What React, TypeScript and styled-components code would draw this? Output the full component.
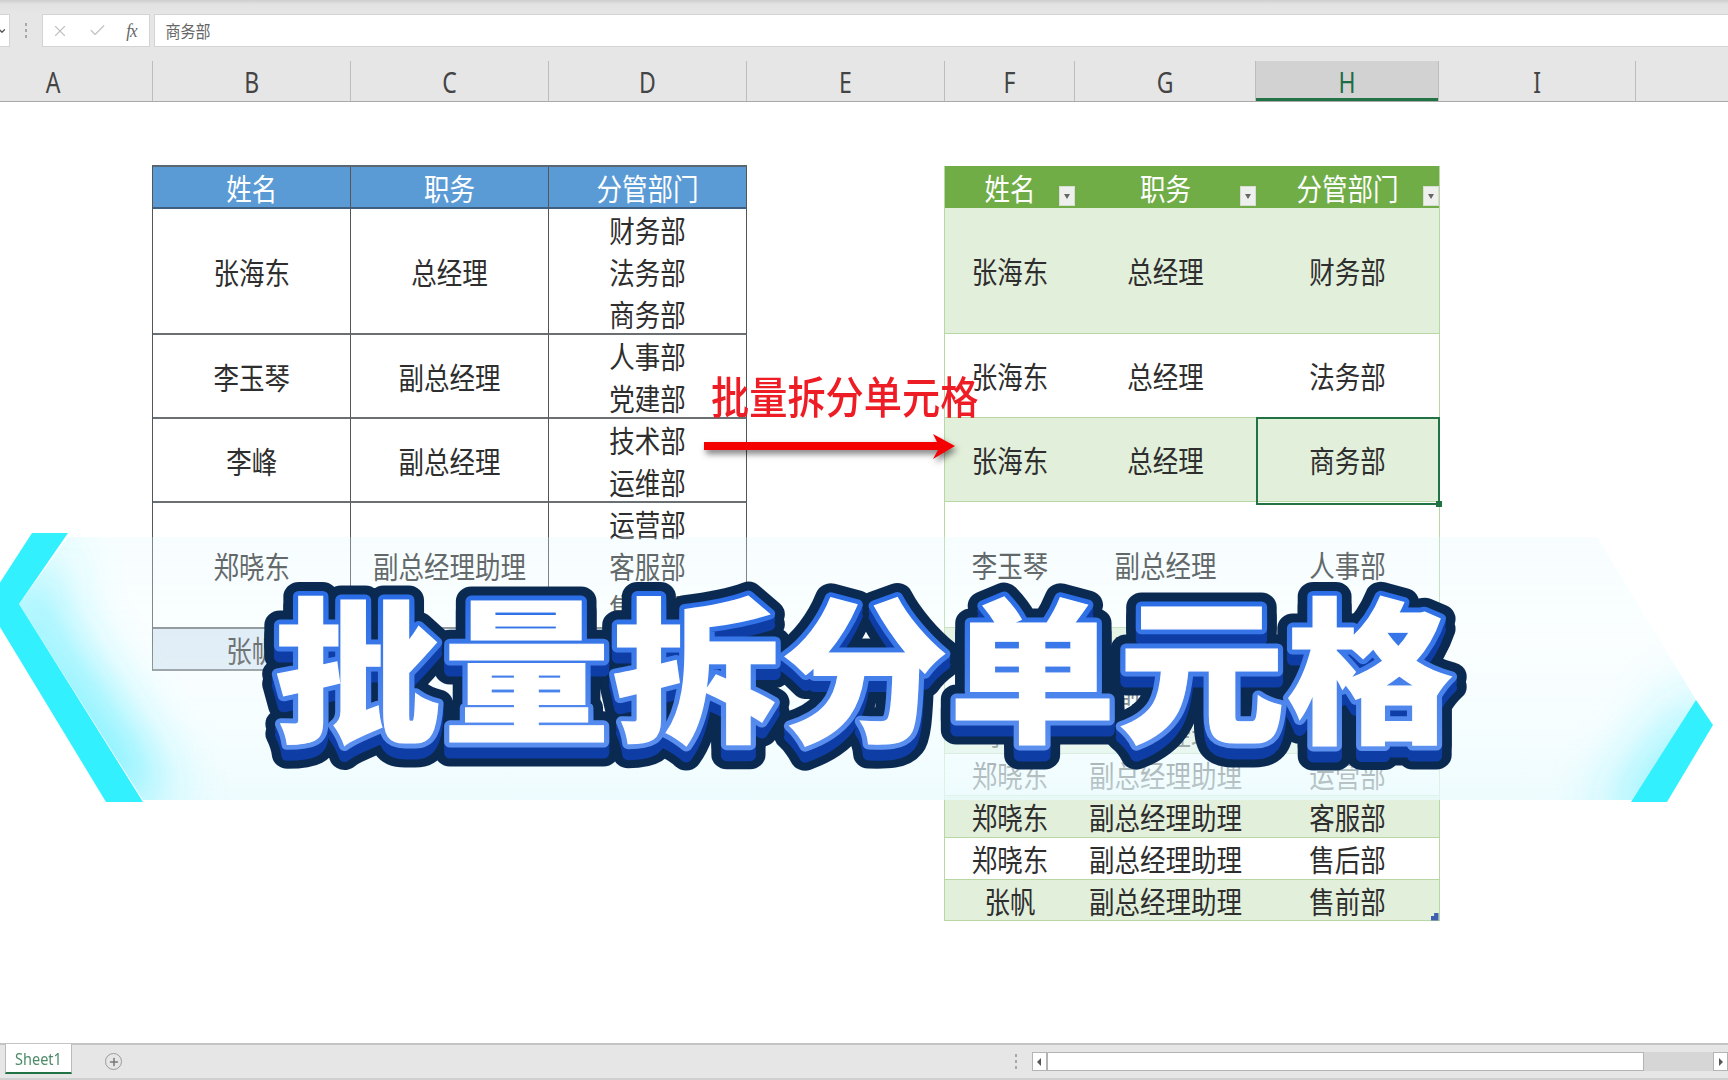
import React from 'react';
import styled, { createGlobalStyle } from 'styled-components';
import { X, Check, Plus, ChevronDown } from 'lucide-react';

const Global = createGlobalStyle`
  html, body { margin: 0; padding: 0; background: #fff; }
  body { font-family: "Noto Sans CJK SC", "Noto Sans", sans-serif; overflow: hidden; }
`;

const COLS = '153px 197.5px 198px 198px 198px 130px 181px 183px 197.5px 1fr';

const Page = styled.div`
  position: relative;
  width: 1728px;
  height: 1080px;
  overflow: hidden;
  display: flex;
  flex-direction: column;
  background: #fff;
`;

const Soft = styled.div`
  display: flex;
  flex-direction: column;
  height: 100%;
  filter: blur(0.5px);
`;

/* ---------- formula bar ---------- */
const FormulaBar = styled.div`
  height: 61px;
  box-sizing: border-box;
  padding-top: 14px;
  padding-bottom: 14px;
  display: flex;
  gap: 4px;
  background: linear-gradient(#cdcdcd 0, #e2e2e2 4px, #e6e6e6 13px);
`;
const NameBox = styled.div`
  width: 10px;
  background: #fff;
  border: 1px solid #d4d4d4;
  border-left: 0;
  box-sizing: border-box;
  display: flex;
  align-items: center;
  overflow: hidden;
  color: #555;
`;
const Grip = styled.div`
  width: 23.5px;
  display: flex;
  flex-direction: column;
  align-items: center;
  justify-content: center;
  gap: 3px;
  span { width: 2px; height: 3px; background: #a8a8a8; }
`;
const FxBox = styled.div`
  width: 108px;
  background: #fff;
  border: 1px solid #d4d4d4;
  box-sizing: border-box;
  display: flex;
  align-items: center;
  justify-content: space-between;
  padding: 0 12px 0 8px;
  color: #c2c2c2;
`;
const FxLabel = styled.i`
  font-family: "Liberation Serif", serif;
  font-size: 17px;
  color: #666;
  letter-spacing: -1px;
  transform: scaleY(1.1);
`;
const FormulaInput = styled.div`
  flex: 1;
  background: #fff;
  border: 1px solid #d4d4d4;
  border-right: 0;
  box-sizing: border-box;
  display: flex;
  align-items: center;
  padding-left: 11px;
  font-size: 15px;
  color: #666;
`;
const Stretched = styled.span`
  display: inline-block;
  transform: scaleY(1.14);
`;

/* ---------- column header ---------- */
const ColumnHeader = styled.div`
  height: 39.5px;
  display: grid;
  grid-template-columns: ${COLS};
  background: #e6e6e6;
  border-bottom: 1.5px solid #a9a9a9;
  box-sizing: content-box;
`;
const ColHead = styled.div<{ $active?: boolean; $shift?: number; $last?: boolean }>`
  display: flex;
  align-items: center;
  justify-content: center;
  box-sizing: border-box;
  padding-right: ${p => p.$shift || 0}px;
  border-right: ${p => (p.$last ? '0' : '1px solid #bdbdbd')};
  background: ${p => (p.$active ? '#d2d2d2' : 'transparent')};
  box-shadow: ${p => (p.$active ? 'inset 0 -3px 0 #217346' : 'none')};
  font-family: "Noto Sans", sans-serif;
  font-size: 23px;
  color: ${p => (p.$active ? '#1f6b45' : '#444')};
  span { display: inline-block; transform: translate(0.5px, 1px) scaleY(1.25); }
`;

/* ---------- sheet ---------- */
const Sheet = styled.div`
  flex: 1;
  display: grid;
  grid-template-columns: ${COLS};
  align-items: start;
  padding-top: 65px;
  background: #fff;
  position: relative;
`;
const rowsTemplate = (rows: number[]) => rows.map(r => `${r}px`).join(' ');

const LeftTable = styled.div<{ $rows: number[] }>`
  grid-column: 2 / 5;
  display: grid;
  grid-template-columns: subgrid;
  grid-template-rows: ${p => rowsTemplate(p.$rows)};
  border-top: 2px solid #5a6672;
  border-left: 1px solid #555;
  margin: -2px 0 0 -1px;
`;
const RightTable = styled.div<{ $rows: number[] }>`
  grid-column: 6 / 9;
  position: relative;
  display: grid;
  grid-template-columns: subgrid;
  grid-template-rows: ${p => rowsTemplate(p.$rows)};
  border-left: 1px solid #b9d7a4;
  border-right: 1px solid #b9d7a4;
  margin: -1px -1px 0;
`;
const BaseCell = styled.div`
  box-sizing: border-box;
  display: flex;
  flex-direction: column;
  align-items: center;
  justify-content: center;
  font-size: 25.5px;
  line-height: 42px;
  color: #2e2e2e;
  white-space: nowrap;
`;
const LeftCell = styled(BaseCell)<{ $fill?: string }>`
  background: ${p => p.$fill || 'transparent'};
  border-right: 1px solid #555;
  border-bottom: 2px solid #6a6f73;
`;
const LeftHead = styled(LeftCell)`
  background: #5b9bd5;
  color: #fff;
  border-bottom-color: #3f5f80;
`;
const RightCell = styled(BaseCell)<{ $band: boolean }>`
  background: ${p => (p.$band ? '#e2efda' : '#fff')};
  border-bottom: 1.5px solid #b9d7a4;
`;
const RightHead = styled(BaseCell)`
  position: relative;
  background: #70ad47;
  color: #fff;
`;
const Line = styled.span`
  display: block;
  height: 42px;
  transform: translateX(0.5px) scaleY(1.16);
`;
const FilterBtn = styled.span`
  position: absolute;
  right: 0;
  bottom: 2px;
  width: 16px;
  height: 20px;
  background: #eef0ee;
  border: 1px solid #d8dcd4;
  box-sizing: border-box;
  &::after {
    content: '';
    position: absolute;
    left: 4px;
    top: 7px;
    border-left: 3px solid transparent;
    border-right: 3px solid transparent;
    border-top: 5px solid #666;
  }
`;
const SelectedCell = styled.div`
  position: absolute;
  left: 311px;
  top: 251px;
  width: 184px;
  height: 88px;
  box-sizing: border-box;
  border: 2px solid #217346;
  &::after {
    content: '';
    position: absolute;
    right: -4px;
    bottom: -4px;
    width: 6px;
    height: 6px;
    background: #217346;
  }
`;
const ResizeCorner = styled.div`
  position: absolute;
  right: 0;
  bottom: 0;
  width: 8px;
  height: 8px;
  background: #3f5fb0;
  clip-path: polygon(100% 0, 100% 100%, 0 100%, 0 45%, 45% 45%, 45% 0);
`;

/* ---------- annotation ---------- */
const RedLabel = styled.div`
  position: absolute;
  left: 711px;
  top: 366px;
  font-size: 38.2px;
  font-weight: 500;
  line-height: 58px;
  color: #ee1c25;
  white-space: nowrap;
  transform: scaleY(1.16);
`;
const ArrowSvg = styled.svg`
  position: absolute;
  left: 700px;
  top: 427px;
  filter: drop-shadow(2px 4px 3px rgba(0, 0, 0, 0.5));
`;

/* ---------- sheet tabs ---------- */
const TabBar = styled.div`
  height: 37px;
  box-sizing: border-box;
  display: flex;
  align-items: stretch;
  background: #e6e6e6;
  border-top: 2.5px solid #c4c4c4;
  border-bottom: 2px solid #d0d0d0;
`;
const Tab = styled.div`
  margin-left: 5px;
  width: 67px;
  height: 30px;
  margin-top: -1px;
  box-sizing: border-box;
  background: #fff;
  border-left: 1px solid #bbb;
  border-right: 1px solid #bbb;
  border-bottom: 2.5px solid #217346;
  display: flex;
  align-items: center;
  justify-content: center;
  font-family: "Noto Sans", sans-serif;
  font-size: 14.5px;
  color: #4d8b69;
`;
const AddSheet = styled.div`
  width: 17px;
  height: 17px;
  margin: 8px 0 0 33px;
  border: 1.5px solid #9a9a9a;
  border-radius: 50%;
  box-sizing: border-box;
  display: flex;
  align-items: center;
  justify-content: center;
  color: #777;
`;
const ScrollArea = styled.div`
  margin-left: auto;
  width: 728px;
  padding-top: 7px;
  box-sizing: border-box;
  display: flex;
  height: 26px;
`;
const ScrollGrip = styled(Grip)`
  width: 31.5px;
`;
const ScrollBtn = styled.div`
  width: 15px;
  height: 19px;
  background: #fff;
  border: 1px solid #b4b4b4;
  box-sizing: border-box;
  display: flex;
  align-items: center;
  justify-content: center;
  flex-shrink: 0;
`;
const Caret = styled.span<{ $dir: 'l' | 'r' }>`
  border-top: 4px solid transparent;
  border-bottom: 4px solid transparent;
  ${p => (p.$dir === 'l' ? 'border-right: 4px solid #555;' : 'border-left: 4px solid #555;')}
`;
const Thumb = styled.div`
  width: 597px;
  height: 19px;
  background: #fff;
  border: 1px solid #b4b4b4;
  box-sizing: border-box;
`;
const Track = styled.div`
  flex: 1;
  height: 19px;
  background: #d6d6d6;
`;

/* ---------- banner ---------- */
const BannerSvg = styled.svg`
  position: absolute;
  inset: 0;
  display: block;
`;

const TITLE = '批量拆分单元格';
const SX = 1.07;
const TITLE_X = [274, 443, 612, 781, 949, 1118, 1286].map(x => x / SX).join(' ');
const titleBase = {
  x: TITLE_X,
  fontFamily: '"Noto Sans CJK SC", sans-serif',
  fontWeight: 900,
  fontSize: 156,
};
const roundStroke = { strokeLinejoin: 'round' as const, strokeLinecap: 'round' as const };
const Y0 = 730;

const LEFT_ROWS = [42, 126, 84, 84, 126, 42];
const leftData: string[][][] = [
  [['张海东'], ['总经理'], ['财务部', '法务部', '商务部']],
  [['李玉琴'], ['副总经理'], ['人事部', '党建部']],
  [['李峰'], ['副总经理'], ['技术部', '运维部']],
  [['郑晓东'], ['副总经理助理'], ['运营部', '客服部', '售后部']],
  [['张帆'], ['副总经理助理'], ['售前部']],
];
const RIGHT_ROWS = [42, 126, 84, 84, 126, 42, 42, 42, 42, 42, 42, 41];
const rightData = [
  ['张海东', '总经理', '财务部'],
  ['张海东', '总经理', '法务部'],
  ['张海东', '总经理', '商务部'],
  ['李玉琴', '副总经理', '人事部'],
  ['李玉琴', '副总经理', '党建部'],
  ['李峰', '副总经理', '技术部'],
  ['李峰', '副总经理', '运维部'],
  ['郑晓东', '副总经理助理', '运营部'],
  ['郑晓东', '副总经理助理', '客服部'],
  ['郑晓东', '副总经理助理', '售后部'],
  ['张帆', '副总经理助理', '售前部'],
];
const HEADS = ['姓名', '职务', '分管部门'];
const LETTERS = ['A', 'B', 'C', 'D', 'E', 'F', 'G', 'H', 'I', ''];

const Banner = () => (
  <BannerSvg width="1728" height="1080" viewBox="0 0 1728 1080">
    <defs>
      <clipPath id="bandClip">
        <polygon points="19,604 68,537 1597,537 1696,700 1667,800 143,800" />
      </clipPath>
      <filter id="glow" x="-40%" y="-40%" width="180%" height="180%">
        <feGaussianBlur stdDeviation="30" />
      </filter>
      <linearGradient id="wash" x1="0" y1="0" x2="0" y2="1">
        <stop offset="0" stopColor="#e4fbff" stopOpacity="0.28" />
        <stop offset="0.4" stopColor="#eefcff" stopOpacity="0.32" />
        <stop offset="0.72" stopColor="#eefcff" stopOpacity="0.55" />
        <stop offset="1" stopColor="#e9fbfe" stopOpacity="0.78" />
      </linearGradient>
      <linearGradient id="edge" gradientUnits="userSpaceOnUse" x1="0" y1="597" x2="0" y2="748">
        <stop offset="0" stopColor="#2a6de6" />
        <stop offset="1" stopColor="#5c90ef" />
      </linearGradient>
    </defs>
    <polygon points="19,604 68,537 1597,537 1696,700 1667,800 143,800" fill="url(#wash)" />
    <g clipPath="url(#bandClip)">
      <polygon points="0,604 60,540 45,604 170,800 100,800" fill="#2ee9ff" fillOpacity="0.72" filter="url(#glow)" />
      <polygon points="1700,690 1720,730 1670,820 1600,820" fill="#2ee9ff" fillOpacity="0.6" filter="url(#glow)" />
    </g>
    <polygon points="32,533 68,533 19,604 143,802 106,802 -14,604" fill="#33f0ff" />
    <polygon points="1696,700 1713,725 1667,802 1631,802" fill="#33f0ff" />

    {/* the title: one text in stacked strokes, back to front */}
    <g transform={`scale(${SX} 1)`}>
      <g aria-hidden="true">
        <text {...titleBase} {...roundStroke} y={Y0 + 10} fill="#0b2a52" stroke="#0b2a52" strokeWidth={29}>{TITLE}</text>
        <text {...titleBase} {...roundStroke} y={Y0} fill="#0b2a52" stroke="#0b2a52" strokeWidth={29}>{TITLE}</text>
        <text {...titleBase} {...roundStroke} y={Y0 + 11} fill="#0f3da6" stroke="#0f3da6" strokeWidth={11}>{TITLE}</text>
        <text {...titleBase} {...roundStroke} y={Y0 + 5} fill="#0f3da6" stroke="#0f3da6" strokeWidth={11}>{TITLE}</text>
        <text {...titleBase} {...roundStroke} y={Y0} fill="url(#edge)" stroke="url(#edge)" strokeWidth={11}>{TITLE}</text>
      </g>
      <text {...titleBase} y={Y0} fill="#fff" stroke="#fff" strokeWidth={1.2} strokeLinejoin="miter">{TITLE}</text>
    </g>
  </BannerSvg>
);

export default function App() {
  return (
    <Page>
      <Global />
      <Soft>
        <FormulaBar>
          <NameBox>
            <ChevronDown size={10} strokeWidth={3} style={{ marginLeft: -3, flexShrink: 0 }} />
          </NameBox>
          <Grip><span /><span /><span /></Grip>
          <FxBox>
            <X size={18} strokeWidth={1.5} />
            <Check size={19} strokeWidth={1.5} />
            <FxLabel>fx</FxLabel>
          </FxBox>
          <FormulaInput><Stretched>商务部</Stretched></FormulaInput>
        </FormulaBar>
        <ColumnHeader>
          {LETTERS.map((l, i) => (
            <ColHead key={i} $active={l === 'H'} $shift={i === 0 ? 47 : 0} $last={i === 9}>
              <span>{l}</span>
            </ColHead>
          ))}
        </ColumnHeader>
        <Sheet>
          <LeftTable $rows={LEFT_ROWS}>
            {HEADS.map(h => (
              <LeftHead key={h}><Line>{h}</Line></LeftHead>
            ))}
            {leftData.map((row, r) =>
              row.map((lines, c) => (
                <LeftCell key={`${r}-${c}`} $fill={r === 4 ? '#dbe7f3' : undefined}>
                  {lines.map(t => <Line key={t}>{t}</Line>)}
                </LeftCell>
              ))
            )}
          </LeftTable>
          <RightTable $rows={RIGHT_ROWS}>
            {HEADS.map(h => (
              <RightHead key={h}>
                <Line>{h}</Line>
                <FilterBtn />
              </RightHead>
            ))}
            {rightData.map((row, r) =>
              row.map((t, c) => (
                <RightCell key={`${r}-${c}`} $band={r % 2 === 0}>
                  <Line>{t}</Line>
                </RightCell>
              ))
            )}
            <SelectedCell />
            <ResizeCorner />
          </RightTable>
        </Sheet>
        <TabBar>
          <Tab><Stretched>Sheet1</Stretched></Tab>
          <AddSheet><Plus size={12} strokeWidth={3} /></AddSheet>
          <ScrollArea>
            <ScrollGrip><span /><span /><span /></ScrollGrip>
            <ScrollBtn><Caret $dir="l" /></ScrollBtn>
            <Thumb />
            <Track />
            <ScrollBtn><Caret $dir="r" /></ScrollBtn>
          </ScrollArea>
        </TabBar>
      </Soft>
      <RedLabel>批量拆分单元格</RedLabel>
      <ArrowSvg width="262" height="40" viewBox="0 0 262 40">
        <path d="M4 15H237L233 7 255 19 233 32 238 23H4Z" fill="#f40000" />
      </ArrowSvg>
      <Banner />
    </Page>
  );
}
